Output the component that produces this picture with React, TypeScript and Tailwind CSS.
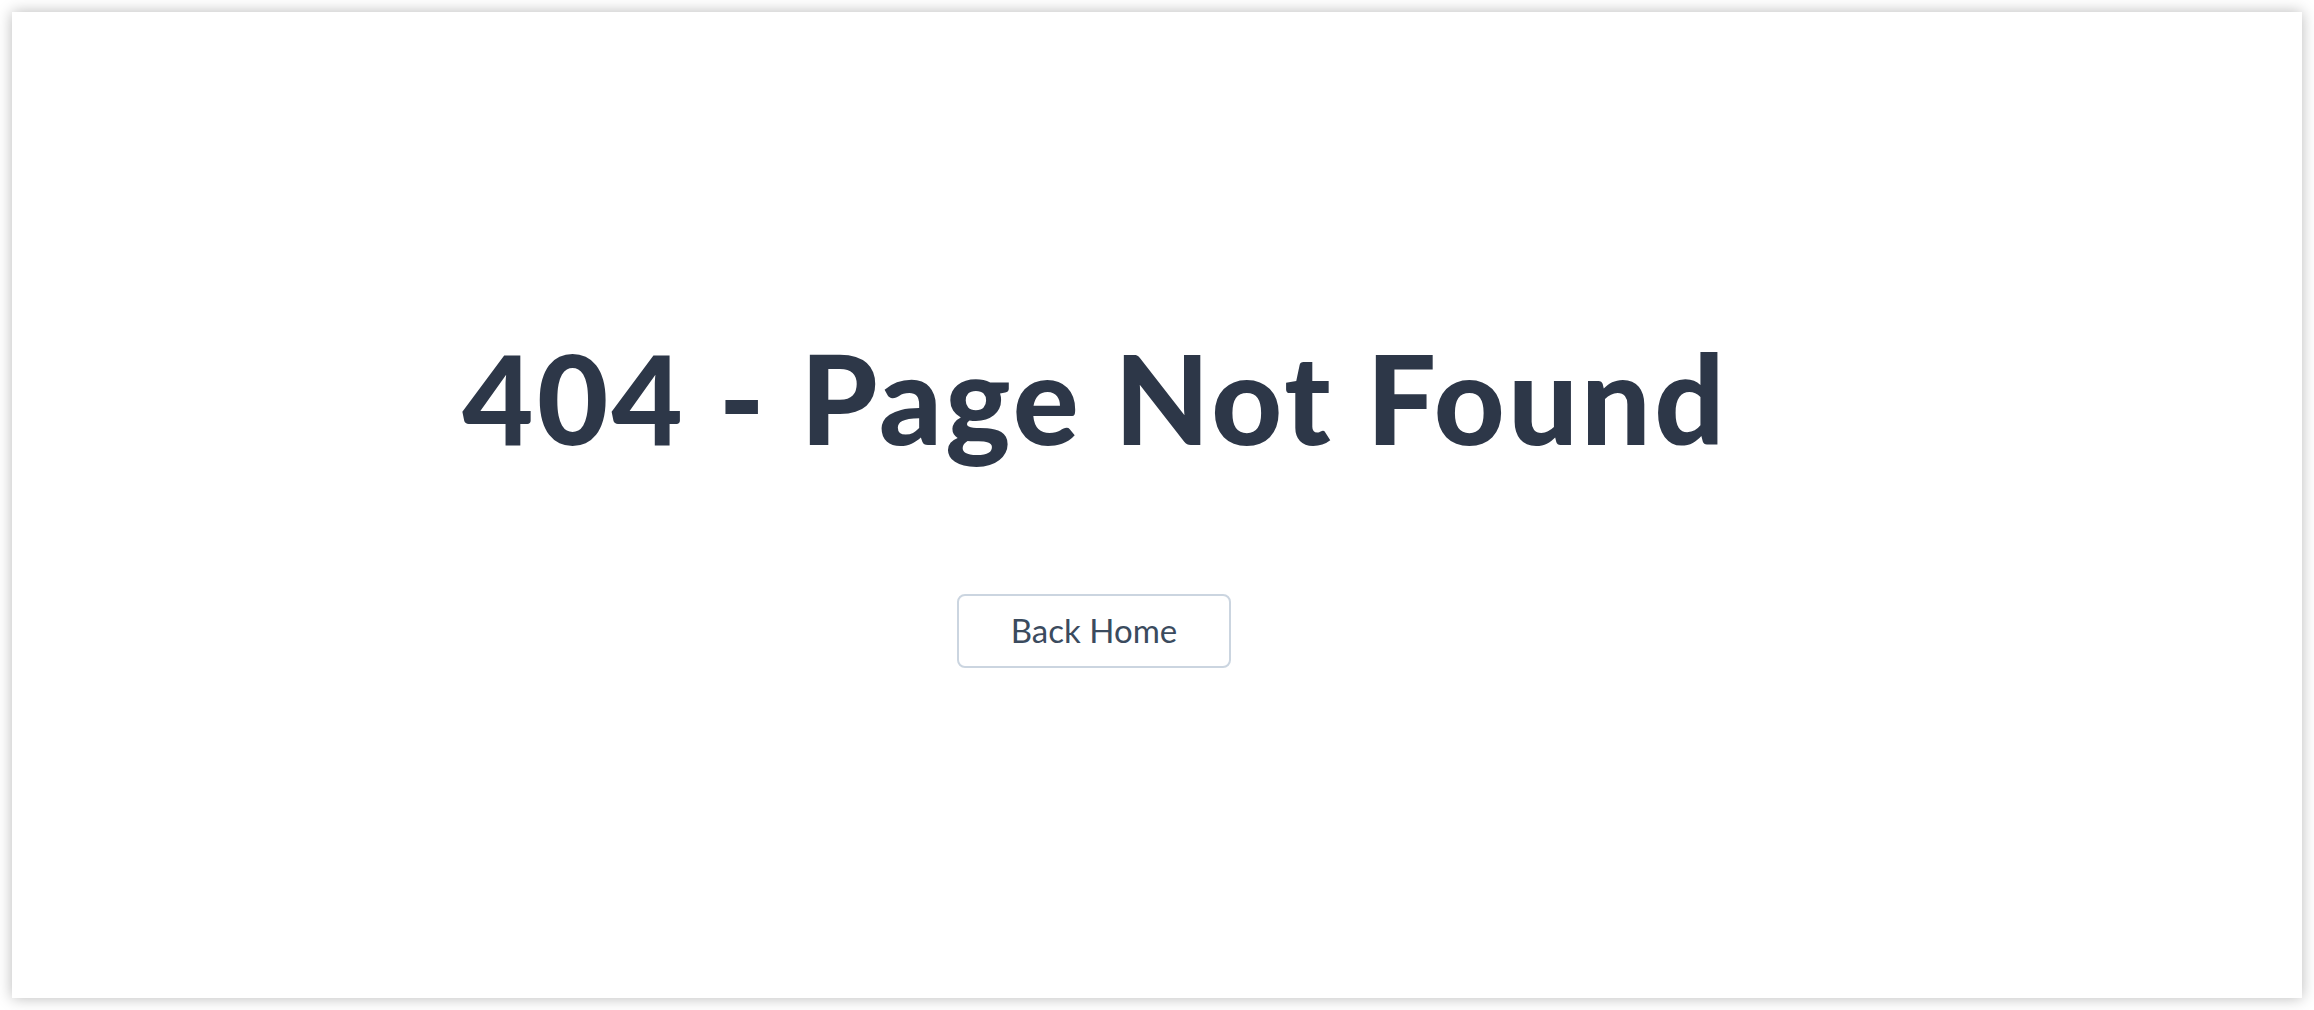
import React from 'react';

const NotFound = (): React.JSX.Element => {
  return (
    <div className="h-screen w-full bg-white p-3">
      <div className="flex h-full w-full flex-col items-center bg-white shadow-[0_0_14px_rgba(0,0,0,0.28)]">
        <h1
          className="mr-[124px] mt-[316px] text-[123px] font-black leading-[140px] tracking-[3.3px] text-[#2d3748]"
          style={{fontFamily: 'Lato, "Noto Sans", sans-serif'}}
        >
          404 - Page Not Found
        </h1>
        <button
          type="button"
          className="mr-[126px] mt-[126px] h-[74px] w-[274px] rounded-lg border-2 border-[#cbd5e0] bg-white text-[33px] text-[#3b4b5e]"
          style={{fontFamily: 'Lato, "Noto Sans", sans-serif'}}
        >
          Back Home
        </button>
      </div>
    </div>
  );
};

export default function App(): React.JSX.Element {
  return <NotFound />;
}
